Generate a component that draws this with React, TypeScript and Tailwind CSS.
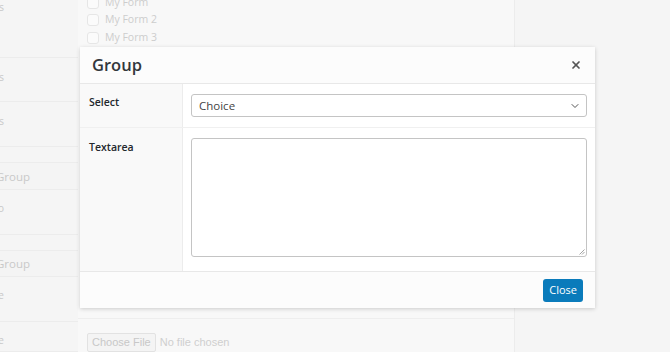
import { ChevronDown, X } from 'lucide-react';

const sideRows = [
  { h: 'h-[58px]', label: 'Settings', pr: 'pr-[74px]', pt: 'pt-0', head: false },
  { h: 'h-[44px]', label: 'Entries', pr: 'pr-[74px]', pt: 'pt-[12px]', head: false },
  { h: 'h-[45px]', label: 'Forms', pr: 'pr-[74px]', pt: 'pt-[12px]', head: false },
  { h: 'h-[16px]', label: '', pr: '', pt: '', head: false },
  { h: 'h-[27px]', label: 'Field Group', pr: 'pr-[48px]', pt: 'pt-[6px]', head: true },
  { h: 'h-[45px]', label: 'Repo', pr: 'pr-[74px]', pt: 'pt-[11px]', head: false },
  { h: 'h-[16px]', label: '', pr: '', pt: '', head: false },
  { h: 'h-[26px]', label: 'Field Group', pr: 'pr-[48px]', pt: 'pt-[5px]', head: true },
  { h: 'h-[45px]', label: 'Name', pr: 'pr-[74px]', pt: 'pt-[11px]', head: false },
  { h: 'h-[30px]', label: 'Type', pr: 'pr-[74px]', pt: 'pt-[11px]', head: false },
];

function Checkbox({ label }: { label: string }) {
  return (
    <div className="flex h-[17.5px] items-center gap-[6px]">
      <span className="h-[12px] w-[12px] rounded-[3px] border border-[#e6e6e6] bg-[#fbfbfb]" />
      <span className="text-[10.5px] text-[#cdcdcd]">{label}</span>
    </div>
  );
}

export default function App() {
  return (
    <div className="relative h-[352px] w-[670px] overflow-hidden bg-[#f5f5f5] font-['Open_Sans',sans-serif]">
      {/* Page behind the dialog */}
      <div className="flex h-full">
        <aside className="w-[78px] overflow-hidden">
          {sideRows.map((row, i) => (
            <div
              key={i}
              className={`${row.h} flex justify-end overflow-hidden border-b border-[#ececec] ${row.pr} ${row.pt} ${
                row.head ? 'bg-[#f4f4f4] text-[11.5px]' : 'text-[10.5px]'
              } whitespace-nowrap leading-[15px] text-[#c9c9c9]`}
            >
              {row.label}
            </div>
          ))}
        </aside>

        <main className="flex w-[437px] flex-col border-r border-[#ececec] bg-[#f8f8f8] px-[9px]">
          <div className="-mt-[6px] flex flex-col">
            <Checkbox label="My Form" />
            <Checkbox label="My Form 2" />
            <Checkbox label="My Form 3" />
          </div>
          <div className="flex-1" />
          <div className="mb-[12px] ml-[-1px] h-[8px] w-[62px] rounded-b-[3px] border border-t-0 border-[#dde6ee]" />
          <div className="-mx-[9px] border-t border-[#eeeeee]" />
          <div className="flex items-center gap-[4px] pt-[14px] font-['Liberation_Sans',sans-serif]">
            <span className="rounded-[2px] border border-[#e2e2e2] bg-[#f4f4f4] px-[4px] py-[1px] text-[11px] leading-[15px] text-[#c8c8c8]">
              Choose File
            </span>
            <span className="text-[11px] text-[#cfcfcf]">No file chosen</span>
          </div>
        </main>

        <div className="flex-1 bg-[#f5f5f5]" />
      </div>

      {/* Dialog */}
      <div className="absolute left-[80px] top-[47px] flex w-[515px] flex-col bg-white shadow-[0_1px_4px_rgba(0,0,0,0.18)]">
        <div className="flex h-[37px] items-center justify-between border-b border-[#e8e8e8] bg-[#fcfcfc] pl-[12px] pr-[13px]">
          <h2 className="text-[16.5px] font-semibold text-[#32373c]">Group</h2>
          <X className="h-[12px] w-[12px] text-[#555]" strokeWidth={3.5} />
        </div>

        <div className="flex border-b border-[#f0f0f0]">
          <div className="w-[103px] border-r border-[#ececec] bg-[#f9f9f9] px-[9px] pt-[11px] text-[10.5px] font-semibold text-[#23282d]">
            Select
          </div>
          <div className="flex-1 px-[8px] pt-[10px] pb-[10px]">
            <div className="flex h-[23px] items-center justify-between rounded-[3px] border border-[#c4c4c4] pl-[7px] pr-[5px]">
              <span className="text-[11.5px] text-[#444]">Choice</span>
              <ChevronDown className="h-[12px] w-[12px] text-[#555]" strokeWidth={2} />
            </div>
          </div>
        </div>

        <div className="flex border-b border-[#e8e8e8]">
          <div className="w-[103px] border-r border-[#ececec] bg-[#f9f9f9] px-[9px] pt-[12px] text-[10.5px] font-semibold text-[#23282d]">
            Textarea
          </div>
          <div className="flex-1 px-[8px] pt-[10px] pb-[14px]">
            <div className="relative h-[119px] rounded-[3px] border border-[#c4c4c4] bg-white">
              <svg className="absolute bottom-[1px] right-[1px]" width="7" height="7" viewBox="0 0 7 7">
                <path d="M6.5 1.5 1.5 6.5M6.5 4 4 6.5" stroke="#999" strokeWidth="0.9" fill="none" />
              </svg>
            </div>
          </div>
        </div>

        <div className="flex h-[36px] items-center justify-end bg-[#fcfcfc] pr-[12px]">
          <button className="h-[23px] rounded-[3px] bg-[#0a7bbb] px-[6px] text-[11px] text-white">Close</button>
        </div>
      </div>
    </div>
  );
}
